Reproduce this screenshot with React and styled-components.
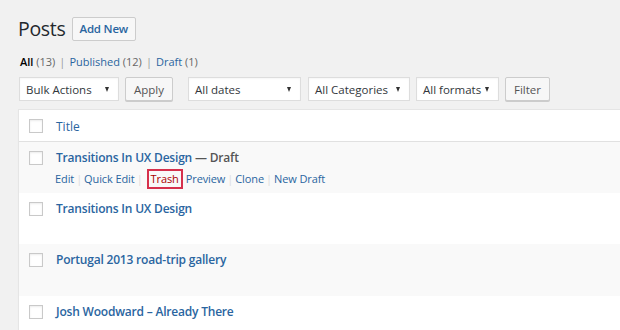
import styled, { createGlobalStyle } from "styled-components"

const Global = createGlobalStyle`
  html, body {
    margin: 0;
    padding: 0;
    background: #f1f1f1;
    font-family: "Open Sans", "Noto Sans", sans-serif;
    font-size: 12px;
    color: #444;
    overflow: hidden;
  }
`

const Page = styled.div`
  padding: 17px 0 0 18px;
  width: 640px;
`

const Heading = styled.div`
  display: flex;
  align-items: center;
  gap: 6px;
  h1 {
    margin: 0;
    font-size: 19.5px;
    font-weight: 400;
    letter-spacing: -0.3px;
    color: #23282d;
    line-height: 24px;
  }
`

const AddNew = styled.span`
  border: 1px solid #ccc;
  background: #f7f7f7;
  color: #2a65a0;
  font-size: 11.5px;
  font-weight: 600;
  letter-spacing: -0.2px;
  padding: 3px 7px;
  line-height: 16px;
  border-radius: 2px;
`

const Filters = styled.ul`
  list-style: none;
  margin: 13px 0 0 2px;
  padding: 0;
  display: flex;
  font-size: 11px;
  line-height: 16px;
  color: #666;
  li + li::before {
    content: "|";
    color: #999;
    margin: 0 4px;
  }
`

const FilterLink = styled.span`
  color: ${p => (p.$current ? "#000" : "#2a65a0")};
  font-weight: ${p => (p.$current ? 600 : 400)};
`

const Count = styled.span`
  color: #666;
`

const Toolbar = styled.div`
  display: flex;
  align-items: center;
  margin-top: 7px;
  margin-left: 1px;
`

const Select = styled.div`
  width: ${p => p.$w}px;
  height: 24px;
  box-sizing: border-box;
  background: #fff;
  border: 1px solid #ddd;
  box-shadow: inset 0 1px 2px rgba(0,0,0,0.04);
  display: flex;
  align-items: center;
  justify-content: space-between;
  padding: 0 9px 0 6px;
  margin-right: ${p => p.$mr}px;
  color: #32373c;
  font-size: 11.5px;
  white-space: nowrap;
  &::after {
    content: "";
    border-left: 2.5px solid transparent;
    border-right: 2.5px solid transparent;
    border-top: 5px solid #333;
  }
`

const Button = styled.div`
  height: 24px;
  box-sizing: border-box;
  padding: 0 8px;
  display: flex;
  align-items: center;
  border: 1px solid #ccc;
  background: #f7f7f7;
  box-shadow: 0 1px 0 #ccc;
  border-radius: 2px;
  color: #555;
  font-size: 11.5px;
  margin-right: ${p => p.$mr}px;
`

const Table = styled.div`
  margin-top: 8px;
  border: 1px solid #e5e5e5;
  border-right: none;
  box-shadow: 0 1px 1px rgba(0,0,0,0.04);
`

const Row = styled.div`
  display: flex;
  align-items: flex-start;
  height: ${p => p.$h}px;
  box-sizing: border-box;
  padding: ${p => p.$pt}px 0 0 10px;
  background: ${p => (p.$alt ? "#f9f9f9" : "#fff")};
  border-bottom: ${p => (p.$head ? "1px solid #e1e1e1" : "none")};
`

const Box = styled.div`
  width: 14px;
  height: 14px;
  flex: none;
  border: 1px solid #c9c9c9;
  background: #fff;
  box-sizing: border-box;
  box-shadow: inset 0 1px 2px rgba(0,0,0,0.08);
`

const Cell = styled.div`
  margin-left: 13px;
  margin-top: ${p => (p.$head ? -1 : -2)}px;
`

const HeadText = styled.div`
  color: #2a65a0;
  font-size: 12px;
  line-height: 18px;
`

const Title = styled.div`
  color: #2a65a0;
  font-weight: 600;
  font-size: 12px;
  letter-spacing: -0.2px;
  line-height: 18px;
`

const State = styled.span`
  color: #555;
`

const Actions = styled.div`
  display: flex;
  align-items: center;
  margin-top: 2px;
  font-size: 11px;
  letter-spacing: -0.1px;
  line-height: 18px;
  color: #2a65a0;
  margin-left: -1px;
`

const Sep = styled.span`
  color: #ddd;
  margin: 0 2px;
`

const TrashLink = styled.span`
  color: #a00;
  border: 2px solid #d6304c;
  padding: 0 2px;
  line-height: 16px;
  margin: 0 3px 0 2px;
`

const posts = [
  { title: "Transitions In UX Design", draft: true },
  { title: "Transitions In UX Design" },
  { title: "Portugal 2013 road-trip gallery" },
  { title: "Josh Woodward – Already There" },
]

export default function App() {
  return (
    <Page>
      <Global />
      <Heading>
        <h1>Posts</h1>
        <AddNew>Add New</AddNew>
      </Heading>
      <Filters>
        <li><FilterLink $current>All</FilterLink> <Count>(13)</Count></li>
        <li><FilterLink>Published</FilterLink> <Count>(12)</Count></li>
        <li><FilterLink>Draft</FilterLink> <Count>(1)</Count></li>
      </Filters>
      <Toolbar>
        <Select $w={100} $mr={6}>Bulk Actions</Select>
        <Button $mr={15}>Apply</Button>
        <Select $w={113} $mr={7}>All dates</Select>
        <Select $w={102} $mr={6}>All Categories</Select>
        <Select $w={83} $mr={6}>All formats</Select>
        <Button>Filter</Button>
      </Toolbar>
      <Table>
        <Row $head $h={32} $pt={9}>
          <Box />
          <Cell $head><HeadText>Title</HeadText></Cell>
        </Row>
        {posts.map((p, i) => (
          <Row key={i} $alt={i % 2 === 0} $h={i === 2 ? 52 : 51} $pt={9}>
            <Box />
            <Cell>
              <Title>
                {p.title}
                {p.draft && <State> — Draft</State>}
              </Title>
              {p.draft && (
                <Actions>
                  <span>Edit</span><Sep>|</Sep>
                  <span>Quick Edit</span><Sep>|</Sep>
                  <TrashLink>Trash</TrashLink>
                  <span>Preview</span><Sep>|</Sep>
                  <span>Clone</span><Sep>|</Sep>
                  <span>New Draft</span>
                </Actions>
              )}
            </Cell>
          </Row>
        ))}
      </Table>
    </Page>
  )
}
